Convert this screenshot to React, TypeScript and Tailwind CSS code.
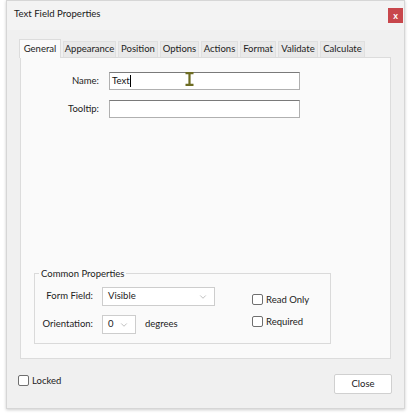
import { ChevronDown } from 'lucide-react'

// ── data ─────────────────────────────────────────────────────────────────────

const TABS: { label: string; w: string }[] = [
  { label: 'Appearance', w: 'w-[53px]' },
  { label: 'Position', w: 'w-[40px]' },
  { label: 'Options', w: 'w-[39px]' },
  { label: 'Actions', w: 'w-[37px]' },
  { label: 'Format', w: 'w-[36px]' },
  { label: 'Validate', w: 'w-[40px]' },
  { label: 'Calculate', w: 'w-[45px]' },
]

const FONT = { fontFamily: 'Lato, "Noto Sans", sans-serif' }

// ── bits ─────────────────────────────────────────────────────────────────────

function Checkbox({ label }: { label: string }) {
  return (
    <label className="flex items-center gap-[3px] text-[9.5px] text-[#222] leading-none">
      <span className="w-[11px] h-[11px] rounded-[2px] border border-[#6f6f6f] bg-white" />
      {label}
    </label>
  )
}

function Select({ value, width }: { value: string; width: string }) {
  return (
    <div
      className={`${width} h-[19px] flex items-center justify-between pl-[5px] pr-[6px] bg-white border border-[#cdcdcd] text-[9.5px] text-[#222]`}
    >
      <span>{value}</span>
      <ChevronDown size={10} strokeWidth={1.3} className="text-[#8a8a8a]" />
    </div>
  )
}

function IBeam() {
  return (
    <svg width="9" height="14" viewBox="0 0 9 14" className="absolute left-[75px] -top-[1px]">
      <path d="M0.5 1.2h8M0.5 12.8h8M4.5 1.2v11.6" stroke="#6d6c22" strokeWidth="2.2" fill="none" />
    </svg>
  )
}

// ── component ─────────────────────────────────────────────────────────────────

export default function App() {
  return (
    <div className="w-[411px] h-[415px] bg-white" style={FONT}>
      <div className="ml-[6px] w-[399px] h-[409px] bg-[#f0f0f0] border border-[#d6d6d6] shadow-[0_1px_3px_rgba(0,0,0,0.2)] flex flex-col">
        {/* title bar */}
        <div className="h-[29px] flex items-start justify-between pl-[7px] pr-[1px] bg-[#f3f3f3]">
          <span className="mt-[6px] text-[9.6px] text-[#1a1a1a]">Text Field Properties</span>
          <div className="w-[15px] h-[15px] mt-[7px] bg-[#c8474c] flex items-center justify-center text-white text-[9px] font-bold leading-none pb-[1px]">
            x
          </div>
        </div>

        {/* tabs */}
        <div className="mt-[9px] ml-[12px] flex items-end">
          <div className="w-[42px] h-[19px] bg-[#fafafa] border border-b-0 border-[#dcdcdc] text-[9.5px] text-[#222] flex justify-center pt-[2px] -mb-[1px] relative z-10">
            General
          </div>
          {TABS.map((t) => (
            <div
              key={t.label}
              className={`${t.w} h-[16px] ml-[2px] bg-[#e9e9e9] border border-b-0 border-[#e0e0e0] text-[9.5px] text-[#222] flex items-center justify-center`}
            >
              {t.label}
            </div>
          ))}
        </div>

        {/* panel */}
        <div className="ml-[13px] w-[371px] h-[302px] bg-[#fafafa] border border-[#dcdcdc] flex flex-col">
          <div className="mt-[14px] flex flex-col gap-[10px]">
            <div className="flex items-center">
              <span className="w-[78px] text-right text-[9.5px] text-[#222]">Name:</span>
              <div className="relative ml-[10px] w-[191px] h-[18px] bg-white border border-[#b0b0b0] border-t-[#7a7a7a] flex items-center pl-[2px] text-[9.5px] text-[#111]">
                Text<span className="w-px h-[12px] bg-black" />
                <IBeam />
              </div>
            </div>
            <div className="flex items-center">
              <span className="w-[78px] text-right text-[9.5px] text-[#222]">Tooltip:</span>
              <div className="ml-[10px] w-[191px] h-[18px] bg-white border border-[#b0b0b0] border-t-[#7a7a7a]" />
            </div>
          </div>

          {/* common properties */}
          <div className="mt-auto mb-[14px] ml-[13px] w-[297px] h-[71px] border border-[#dadada] relative">
            <span className="absolute -top-[7px] left-[4px] px-[2px] bg-[#fafafa] text-[9.5px] text-[#222] leading-[13px]">
              Common Properties
            </span>
            <div className="flex pt-[13px]">
              <div className="flex flex-col gap-[9px]">
                <div className="flex items-center">
                  <span className="w-[58px] text-right text-[9.5px] text-[#222]">Form Field:</span>
                  <div className="ml-[9px]">
                    <Select value="Visible" width="w-[113px]" />
                  </div>
                </div>
                <div className="flex items-center">
                  <span className="w-[58px] text-right text-[9.5px] text-[#222]">Orientation:</span>
                  <div className="ml-[9px]">
                    <Select value="0" width="w-[34px]" />
                  </div>
                  <span className="ml-[9px] text-[9.5px] text-[#222]">degrees</span>
                </div>
              </div>
              <div className="ml-[37px] mt-[7px] flex flex-col gap-[11px]">
                <Checkbox label="Read Only" />
                <Checkbox label="Required" />
              </div>
            </div>
          </div>
        </div>

        {/* footer */}
        <div className="mt-[15px] ml-[11px] mr-[12px] flex items-start justify-between">
          <div className="mt-[1px]">
            <Checkbox label="Locked" />
          </div>
          <button className="w-[58px] h-[20px] bg-white border border-[#d0d0d0] rounded-[2px] text-[9.5px] text-[#222]">
            Close
          </button>
        </div>
      </div>
    </div>
  )
}
